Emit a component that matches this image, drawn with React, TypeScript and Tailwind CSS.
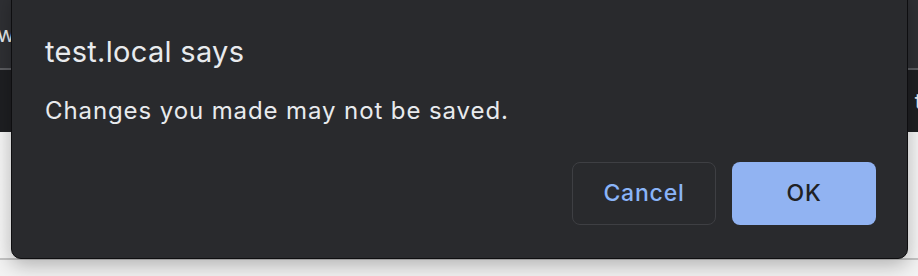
const App = () => {
  return (
    <div className="relative w-[918px] h-[276px] overflow-hidden bg-[#f3f3f3] font-['Inter',sans-serif]">
      {/* page behind the dialog */}
      <div className="flex flex-col h-full">
        <div className="h-[68px] bg-[#2f3034] flex items-center">
          <span className="-ml-[3px] text-[22px] text-[#e8eaed]">w</span>
        </div>
        <div className="h-[2px] bg-[#5c5d61]" />
        <div className="h-[62px] bg-[#1e1f22] flex items-center justify-end">
          <span className="-mr-[4px] text-[22px] text-[#e8eaed]">t</span>
        </div>
        <div className="flex-1 bg-gradient-to-r from-[#f6f6f6] via-[#ffffff] to-[#f6f6f6]" />
        <div className="h-[2px] bg-[#c4c4c4] mb-[16px]" />
      </div>

      {/* dialog */}
      <div className="absolute left-[11px] top-[-12px] w-[897px] h-[271px] rounded-[10px] bg-[#292a2d] border border-[#0e0e10] shadow-[0_6px_20px_rgba(0,0,0,0.28)] pl-[33px] pr-[31px] pt-[46px] flex flex-col">
        <h1 className="text-[29px] leading-[34px] text-[#e8eaed] tracking-[0.3px]">test.local says</h1>
        <p className="mt-[27px] text-[24px] leading-[30px] text-[#e8eaed] tracking-[0.9px]">Changes you made may not be saved.</p>
        <div className="mt-[36px] flex justify-end gap-[16px]">
          <button className="w-[144px] h-[63px] rounded-[8px] border border-[#3e3f43] text-[23px] font-medium tracking-[0.8px] text-[#8ab4f8]">
            Cancel
          </button>
          <button className="w-[144px] h-[63px] rounded-[8px] bg-[#91b3f2] text-[23px] font-medium tracking-[0.8px] text-[#202124]">
            OK
          </button>
        </div>
      </div>
    </div>
  );
};

export default App;
